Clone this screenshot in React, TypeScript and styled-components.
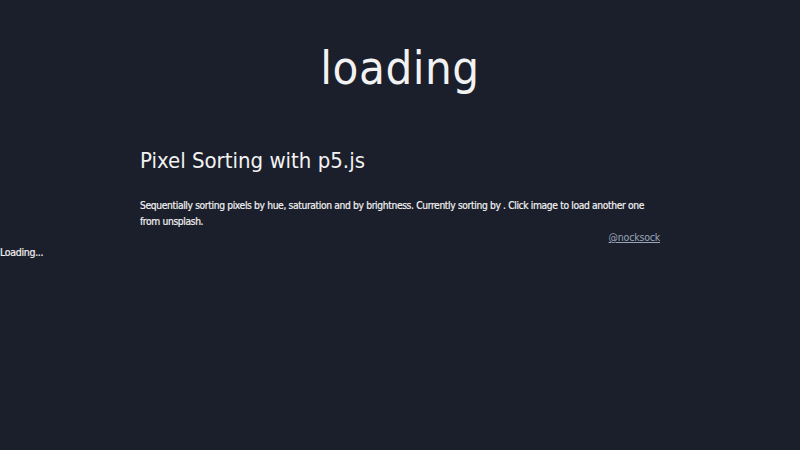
import React from "react";
import styled, { createGlobalStyle } from "styled-components";

const GlobalStyle = createGlobalStyle`
  html, body {
    margin: 0;
    padding: 0;
    background: #1b1f2b;
    color: #f2f2f2;
    font-family: "DejaVu Sans Condensed", "DejaVu Sans", sans-serif;
  }
`;

const Page = styled.div`
  min-height: 450px;
  display: flex;
  flex-direction: column;
`;

const Title = styled.h1`
  margin: 0;
  padding-top: 38px;
  text-align: center;
  font-size: 47px;
  font-weight: 400;
  line-height: 60px;
  letter-spacing: 0.5px;
`;

const Content = styled.main`
  width: 520px;
  margin: 0 auto;
  padding-top: 49px;
`;

const Heading = styled.h2`
  margin: 0 0 23px;
  font-size: 22px;
  font-weight: 400;
  line-height: 28px;
`;

const Description = styled.p`
  margin: 0;
  font-size: 10.2px;
  line-height: 16px;
  font-weight: 400;
  letter-spacing: -0.35px;
  -webkit-text-stroke: 0.2px #f2f2f2;
`;

const Credit = styled.div`
  text-align: right;
  font-size: 10.5px;
  line-height: 14px;
  letter-spacing: -0.2px;

  a {
    color: #9aa4b8;
    text-decoration: underline;
  }
`;

const LoadingNote = styled.div`
  font-size: 10.5px;
  line-height: 16px;
  font-weight: 400;
  letter-spacing: -0.3px;
  -webkit-text-stroke: 0.2px #f2f2f2;
`;

export default function App() {
  return (
    <Page>
      <GlobalStyle />
      <Title>loading</Title>
      <Content>
        <Heading>Pixel Sorting with p5.js</Heading>
        <Description>
          Sequentially sorting pixels by hue, saturation and by brightness.
          Currently sorting by . Click image to load another one from unsplash.
        </Description>
        <Credit>
          <a href="#">@nocksock</a>
        </Credit>
      </Content>
      <LoadingNote>Loading...</LoadingNote>
    </Page>
  );
}
